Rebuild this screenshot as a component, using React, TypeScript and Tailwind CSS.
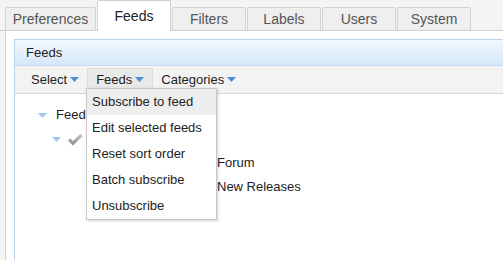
import React from "react";

const tabs = ["Preferences", "Feeds", "Filters", "Labels", "Users", "System"];
const menuItems = [
  "Subscribe to feed",
  "Edit selected feeds",
  "Reset sort order",
  "Batch subscribe",
  "Unsubscribe",
];

function Arrow({ color = "#4b8fd4" }: { color?: string }) {
  return (
    <svg width="9" height="5" viewBox="0 0 9 5" className="ml-[3px]">
      <path d="M0 0h9L4.5 5z" fill={color} />
    </svg>
  );
}

function Check() {
  return (
    <svg width="16" height="13" viewBox="0 0 16 13">
      <defs>
        <linearGradient id="ck" x1="0" y1="0" x2="0" y2="1">
          <stop offset="0" stopColor="#c4c4c4" />
          <stop offset="1" stopColor="#8a8a8a" />
        </linearGradient>
      </defs>
      <path d="M1 7.5l2.2-2.2 2.8 2.8L13.4 0.8 15.6 3 6 12.4z" fill="url(#ck)" />
    </svg>
  );
}

export default function App() {
  return (
    <div
      className="relative w-[503px] h-[260px] overflow-hidden bg-[#f4f4f4] text-[#222]"
      style={{ fontFamily: '"Liberation Sans", Arial, sans-serif' }}
    >
      {/* tab strip */}
      <div className="flex items-end h-[31px] pl-[5px] gap-[1px] border-b border-[#d0d0d0]">
        {tabs.map((t, i) =>
          i === 1 ? (
            <div
              key={t}
              className="w-[74px] h-[31px] -mb-px flex items-end justify-center pb-[4px] bg-white border border-b-0 border-[#d0d0d0] rounded-t-[2px] text-[14px] text-[#222]"
            >
              {t}
            </div>
          ) : (
            <div
              key={t}
              className={`${i === 0 ? "w-[91px]" : "w-[74px]"} h-[23px] flex items-center justify-center bg-[#efefef] border border-b-0 border-[#d3d3d3] rounded-t-[2px] text-[14px] text-[#555]`}
            >
              {t}
            </div>
          )
        )}
      </div>

      {/* outer panel */}
      <div className="ml-[5px] h-[229px] bg-white border-l border-[#d0d0d0] pt-[8px] pl-[8px]">
        <div className="h-full border-l border-t border-[#b9d2ec]">
          <div className="h-[25px] flex items-center pl-[11px] text-[13px] text-[#222] bg-[linear-gradient(#f2f8fe,#d5e7fa)]">
            Feeds
          </div>
          <div className="h-[29px] flex items-center pl-[7px] bg-[#f3f3f3] border-t border-[#c8dbef] border-b border-b-[#d5d5d5] text-[13px]">
            <div className="h-[23px] flex items-center px-[8px] border border-transparent">
              Select
              <Arrow />
            </div>
            <div className="h-[23px] flex items-center px-[8px] -ml-[1px] bg-[#e9e9e9] border border-[#dcdcdc]">
              Feeds
              <Arrow />
            </div>
            <div className="h-[23px] flex items-center px-[7px] border border-transparent">
              Categories
              <Arrow />
            </div>
          </div>

          {/* tree */}
          <div className="pt-[9px] text-[13px] text-[#222]">
            <div className="h-[24px] flex items-center pl-[20px]">
              <Arrow color="#a3c4ec" />
              <span className="ml-[9px]">Feeds</span>
            </div>
            <div className="h-[24px] flex items-center pl-[34px]">
              <Arrow color="#a3c4ec" />
              <span className="ml-[6px]">
                <Check />
              </span>
            </div>
            <div className="h-[24px] flex items-center pl-[202px]">Forum</div>
            <div className="h-[24px] flex items-center pl-[202px]">New Releases</div>
          </div>
        </div>
      </div>

      {/* dropdown menu */}
      <div className="absolute left-[86px] top-[88px] w-[131px] bg-white border border-[#c8c8c8] shadow-[1px_1px_3px_rgba(0,0,0,0.18)] text-[13px] text-[#222]">
        {menuItems.map((m, i) => (
          <div
            key={m}
            className={`h-[26px] flex items-center pl-[5px] ${i === 0 ? "bg-[#eeeeee]" : ""}`}
          >
            {m}
          </div>
        ))}
      </div>
    </div>
  );
}
